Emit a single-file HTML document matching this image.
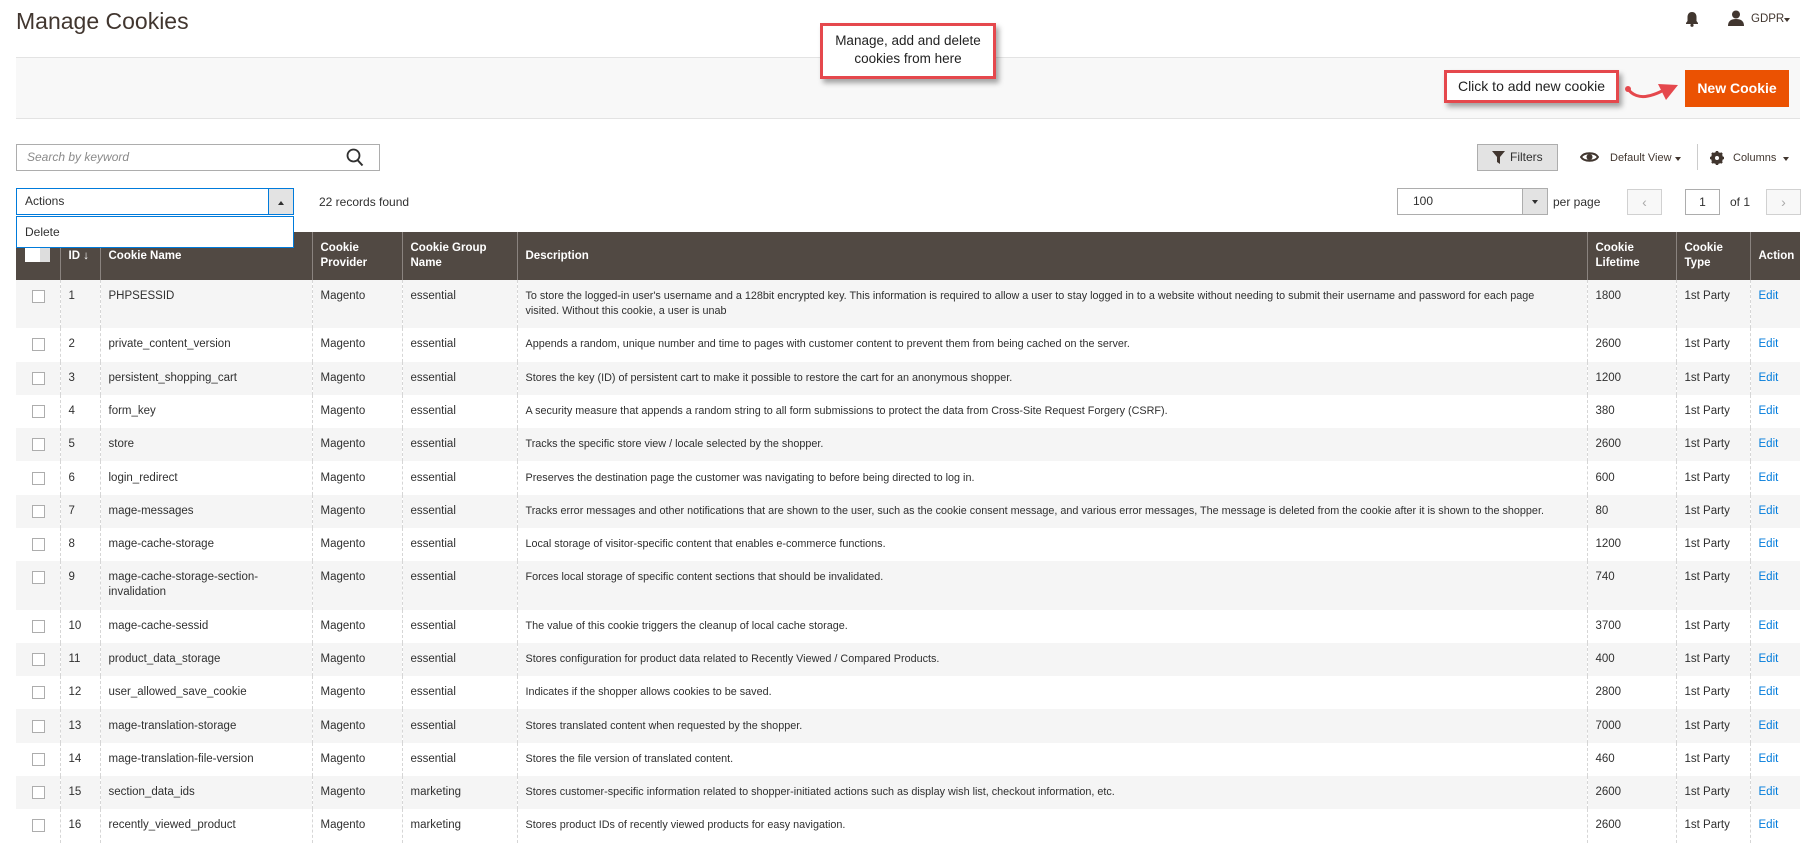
<!DOCTYPE html>
<html><head><meta charset="utf-8"><style>
*{box-sizing:border-box;margin:0;padding:0}
body{width:1814px;height:812px;overflow:hidden;background:#fff;font-family:"Liberation Sans",sans-serif;color:#303030;position:relative}
.a{position:absolute}
.title{left:16px;top:8px;font-size:23px;color:#41362f;font-weight:normal}
.bar{left:16px;top:57px;width:1784px;height:62px;background:#f8f8f8;border-top:1px solid #e3e3e3;border-bottom:1px solid #e3e3e3}
.tip{background:#fff;border:3px solid #e5484d;box-shadow:3px 4px 5px rgba(0,0,0,.35);text-align:center;color:#222}
.btn{left:1685px;top:70px;width:104px;height:37px;background:#eb5202;color:#fff;font-weight:bold;font-size:14px;line-height:37px;text-align:center}
.search{left:16px;top:144px;width:364px;height:27px;border:1px solid #adadad;font-size:12px;font-style:italic;color:#8a8a8a;padding-left:10px;line-height:25px}
.filters{left:1477px;top:144px;width:81px;height:27px;background:#e3e3e3;border:1px solid #adadad;font-size:12px;line-height:25px;padding-left:32px;color:#303030}
.sm{font-size:11px;color:#41362f}
.actions{left:16px;top:188px;width:278px;height:27px;border:1px solid #007bdb;font-size:12px;line-height:25px;padding-left:8px}
.actions .ar{position:absolute;right:0;top:0;width:25px;height:25px;background:#e3e3e3;border-left:1px solid #007bdb}
.dd{left:16px;top:216px;width:278px;height:32px;border:1px solid #007bdb;background:#fff;font-size:12px;line-height:30px;padding-left:8px;z-index:5}
.pp{left:1397px;top:188px;width:151px;height:27px;border:1px solid #adadad;font-size:12px;line-height:25px;padding-left:15px}
.pp .ar{position:absolute;right:0;top:0;width:25px;height:25px;background:#e3e3e3;border-left:1px solid #adadad}
.nav{width:35px;height:26px;border:1px solid #d1d1d1;background:#f8f8f8;color:#aaa;text-align:center;line-height:24px;font-size:14px}
table{position:absolute;left:16px;top:232px;width:1784px;border-collapse:collapse;table-layout:fixed;font-size:11.5px}
th{background:#514943;color:#fff;font-weight:bold;text-align:left;padding:0 8px;height:48px;border-left:1px solid #8a837f;line-height:15px;vertical-align:middle}
th:first-child{border-left:none}
td{padding:9.15px 8px;line-height:15px;vertical-align:top;border-left:1px dashed #d6d6d6;white-space:nowrap;overflow:hidden}
td:nth-child(6){font-size:10.8px}
td:first-child{border-left:none;padding-left:16px}
tr:nth-child(even) td{background:#f5f5f5}
.cb{display:inline-block;width:13px;height:13px;border:1px solid #adadad;background:#fff;vertical-align:top;margin-top:1px}
a{color:#007bdb;text-decoration:none}
</style></head><body>
<div class="a title">Manage Cookies</div>
<svg class="a" style="left:1685px;top:11px" width="14" height="16" viewBox="0 0 14 16"><path d="M7 1c-3 0-4.5 2.3-4.5 5v4L1 12v1h12v-1l-1.5-2V6C11.5 3.3 10 1 7 1z" fill="#41362f"/><circle cx="7" cy="14.3" r="1.6" fill="#41362f"/></svg>
<svg class="a" style="left:1728px;top:10px" width="16" height="16" viewBox="0 0 16 16"><circle cx="8" cy="4.5" r="4" fill="#41362f"/><path d="M0 16c0-5 3-7 8-7s8 2 8 7z" fill="#41362f"/></svg>
<div class="a sm" style="left:1751px;top:13px;font-size:11.5px">GDPR</div>
<div class="a" style="left:1784px;top:18px;border:3.5px solid transparent;border-top:4px solid #41362f"></div>
<div class="a bar"></div>
<div class="a tip" style="left:820px;top:23px;width:176px;height:56px;font-size:13.5px;line-height:18px;padding-top:6px">Manage, add and delete<br>cookies from here</div>
<div class="a tip" style="left:1444px;top:70px;width:175px;height:33px;font-size:14px;line-height:27px">Click to add new cookie</div>
<svg class="a" style="left:1620px;top:75px" width="64" height="30" viewBox="0 0 64 30"><circle cx="8" cy="14" r="3" fill="#e5484d"/><path d="M8 14c4 6 12 9 20 7 6-1 10-3 14-5" stroke="#e5484d" stroke-width="3" fill="none"/><path d="M38 9l20 1-12 15z" fill="#e5484d"/></svg>
<div class="a btn">New Cookie</div>
<div class="a search">Search by keyword</div>
<svg class="a" style="left:346px;top:148px" width="18" height="19" viewBox="0 0 18 19"><circle cx="7.5" cy="7.5" r="6" stroke="#303030" stroke-width="1.8" fill="none"/><path d="M11.5 12l5 5.5" stroke="#303030" stroke-width="2"/></svg>
<div class="a filters">Filters</div>
<svg class="a" style="left:1492px;top:151px" width="13" height="13" viewBox="0 0 13 13"><path d="M0 0h13L8 6v7L5 11V6z" fill="#41362f"/></svg>
<svg class="a" style="left:1580px;top:151px" width="19" height="12" viewBox="0 0 19 12"><path d="M1 6C4 1 15 1 18 6 15 11 4 11 1 6z" fill="none" stroke="#41362f" stroke-width="2"/><circle cx="9.5" cy="6" r="3" fill="#41362f"/></svg>
<div class="a sm" style="left:1610px;top:152px">Default View</div>
<div class="a" style="left:1675px;top:157px;border:3.5px solid transparent;border-top:4px solid #41362f"></div>
<div class="a" style="left:1697px;top:144px;width:1px;height:26px;background:#ccc"></div>
<svg class="a" style="left:1710px;top:151px" width="14" height="14" viewBox="0 0 14 14"><circle cx="7" cy="7" r="4.5" fill="none" stroke="#41362f" stroke-width="3"/><path d="M7 0v14M0 7h14M2 2l10 10M12 2L2 12" stroke="#41362f" stroke-width="2.5"/><circle cx="7" cy="7" r="2" fill="#fff"/></svg>
<div class="a sm" style="left:1733px;top:152px">Columns</div>
<div class="a" style="left:1783px;top:157px;border:3.5px solid transparent;border-top:4px solid #41362f"></div>
<div class="a actions">Actions<div class="ar"><div class="a" style="left:9px;top:9px;border:3.5px solid transparent;border-bottom:4px solid #303030"></div></div></div>
<div class="a dd">Delete</div>
<div class="a" style="left:319px;top:195px;font-size:12px">22 records found</div>
<div class="a pp">100<div class="ar"><div class="a" style="left:9px;top:11px;border:3.5px solid transparent;border-top:4px solid #303030"></div></div></div>
<div class="a" style="left:1553px;top:195px;font-size:12px">per page</div>
<div class="a nav" style="left:1627px;top:189px">&#8249;</div>
<div class="a" style="left:1685px;top:189px;width:35px;height:26px;border:1px solid #adadad;text-align:center;line-height:24px;font-size:12px">1</div>
<div class="a" style="left:1730px;top:195px;font-size:12px">of 1</div>
<div class="a nav" style="left:1766px;top:189px">&#8250;</div>
<table>
<colgroup><col style="width:44px"><col style="width:40px"><col style="width:212px"><col style="width:90px"><col style="width:115px"><col style="width:1070px"><col style="width:89px"><col style="width:74px"><col style="width:50px"></colgroup>
<tr><th style="padding-left:9px"><span style="display:inline-block;width:25px;height:14px;background:#fff;vertical-align:middle;position:relative"><span style="position:absolute;right:0;top:0;width:10px;height:14px;background:#ddd"></span></span></th><th>ID &#8595;</th><th>Cookie Name</th><th>Cookie<br>Provider</th><th>Cookie Group<br>Name</th><th>Description</th><th>Cookie<br>Lifetime</th><th>Cookie<br>Type</th><th>Action</th></tr>
<tr><td><span class="cb"></span></td><td>1</td><td>PHPSESSID</td><td>Magento</td><td>essential</td><td>To store the logged-in user's username and a 128bit encrypted key. This information is required to allow a user to stay logged in to a website without needing to submit their username and password for each page<br>visited. Without this cookie, a user is unab</td><td>1800</td><td>1st Party</td><td><a>Edit</a></td></tr>
<tr><td><span class="cb"></span></td><td>2</td><td>private_content_version</td><td>Magento</td><td>essential</td><td>Appends a random, unique number and time to pages with customer content to prevent them from being cached on the server.</td><td>2600</td><td>1st Party</td><td><a>Edit</a></td></tr>
<tr><td><span class="cb"></span></td><td>3</td><td>persistent_shopping_cart</td><td>Magento</td><td>essential</td><td>Stores the key (ID) of persistent cart to make it possible to restore the cart for an anonymous shopper.</td><td>1200</td><td>1st Party</td><td><a>Edit</a></td></tr>
<tr><td><span class="cb"></span></td><td>4</td><td>form_key</td><td>Magento</td><td>essential</td><td>A security measure that appends a random string to all form submissions to protect the data from Cross-Site Request Forgery (CSRF).</td><td>380</td><td>1st Party</td><td><a>Edit</a></td></tr>
<tr><td><span class="cb"></span></td><td>5</td><td>store</td><td>Magento</td><td>essential</td><td>Tracks the specific store view / locale selected by the shopper.</td><td>2600</td><td>1st Party</td><td><a>Edit</a></td></tr>
<tr><td><span class="cb"></span></td><td>6</td><td>login_redirect</td><td>Magento</td><td>essential</td><td>Preserves the destination page the customer was navigating to before being directed to log in.</td><td>600</td><td>1st Party</td><td><a>Edit</a></td></tr>
<tr><td><span class="cb"></span></td><td>7</td><td>mage-messages</td><td>Magento</td><td>essential</td><td>Tracks error messages and other notifications that are shown to the user, such as the cookie consent message, and various error messages, The message is deleted from the cookie after it is shown to the shopper.</td><td>80</td><td>1st Party</td><td><a>Edit</a></td></tr>
<tr><td><span class="cb"></span></td><td>8</td><td>mage-cache-storage</td><td>Magento</td><td>essential</td><td>Local storage of visitor-specific content that enables e-commerce functions.</td><td>1200</td><td>1st Party</td><td><a>Edit</a></td></tr>
<tr><td><span class="cb"></span></td><td>9</td><td>mage-cache-storage-section-<br>invalidation</td><td>Magento</td><td>essential</td><td>Forces local storage of specific content sections that should be invalidated.</td><td>740</td><td>1st Party</td><td><a>Edit</a></td></tr>
<tr><td><span class="cb"></span></td><td>10</td><td>mage-cache-sessid</td><td>Magento</td><td>essential</td><td>The value of this cookie triggers the cleanup of local cache storage.</td><td>3700</td><td>1st Party</td><td><a>Edit</a></td></tr>
<tr><td><span class="cb"></span></td><td>11</td><td>product_data_storage</td><td>Magento</td><td>essential</td><td>Stores configuration for product data related to Recently Viewed / Compared Products.</td><td>400</td><td>1st Party</td><td><a>Edit</a></td></tr>
<tr><td><span class="cb"></span></td><td>12</td><td>user_allowed_save_cookie</td><td>Magento</td><td>essential</td><td>Indicates if the shopper allows cookies to be saved.</td><td>2800</td><td>1st Party</td><td><a>Edit</a></td></tr>
<tr><td><span class="cb"></span></td><td>13</td><td>mage-translation-storage</td><td>Magento</td><td>essential</td><td>Stores translated content when requested by the shopper.</td><td>7000</td><td>1st Party</td><td><a>Edit</a></td></tr>
<tr><td><span class="cb"></span></td><td>14</td><td>mage-translation-file-version</td><td>Magento</td><td>essential</td><td>Stores the file version of translated content.</td><td>460</td><td>1st Party</td><td><a>Edit</a></td></tr>
<tr><td><span class="cb"></span></td><td>15</td><td>section_data_ids</td><td>Magento</td><td>marketing</td><td>Stores customer-specific information related to shopper-initiated actions such as display wish list, checkout information, etc.</td><td>2600</td><td>1st Party</td><td><a>Edit</a></td></tr>
<tr><td><span class="cb"></span></td><td>16</td><td>recently_viewed_product</td><td>Magento</td><td>marketing</td><td>Stores product IDs of recently viewed products for easy navigation.</td><td>2600</td><td>1st Party</td><td><a>Edit</a></td></tr>
</table>
</body></html>
